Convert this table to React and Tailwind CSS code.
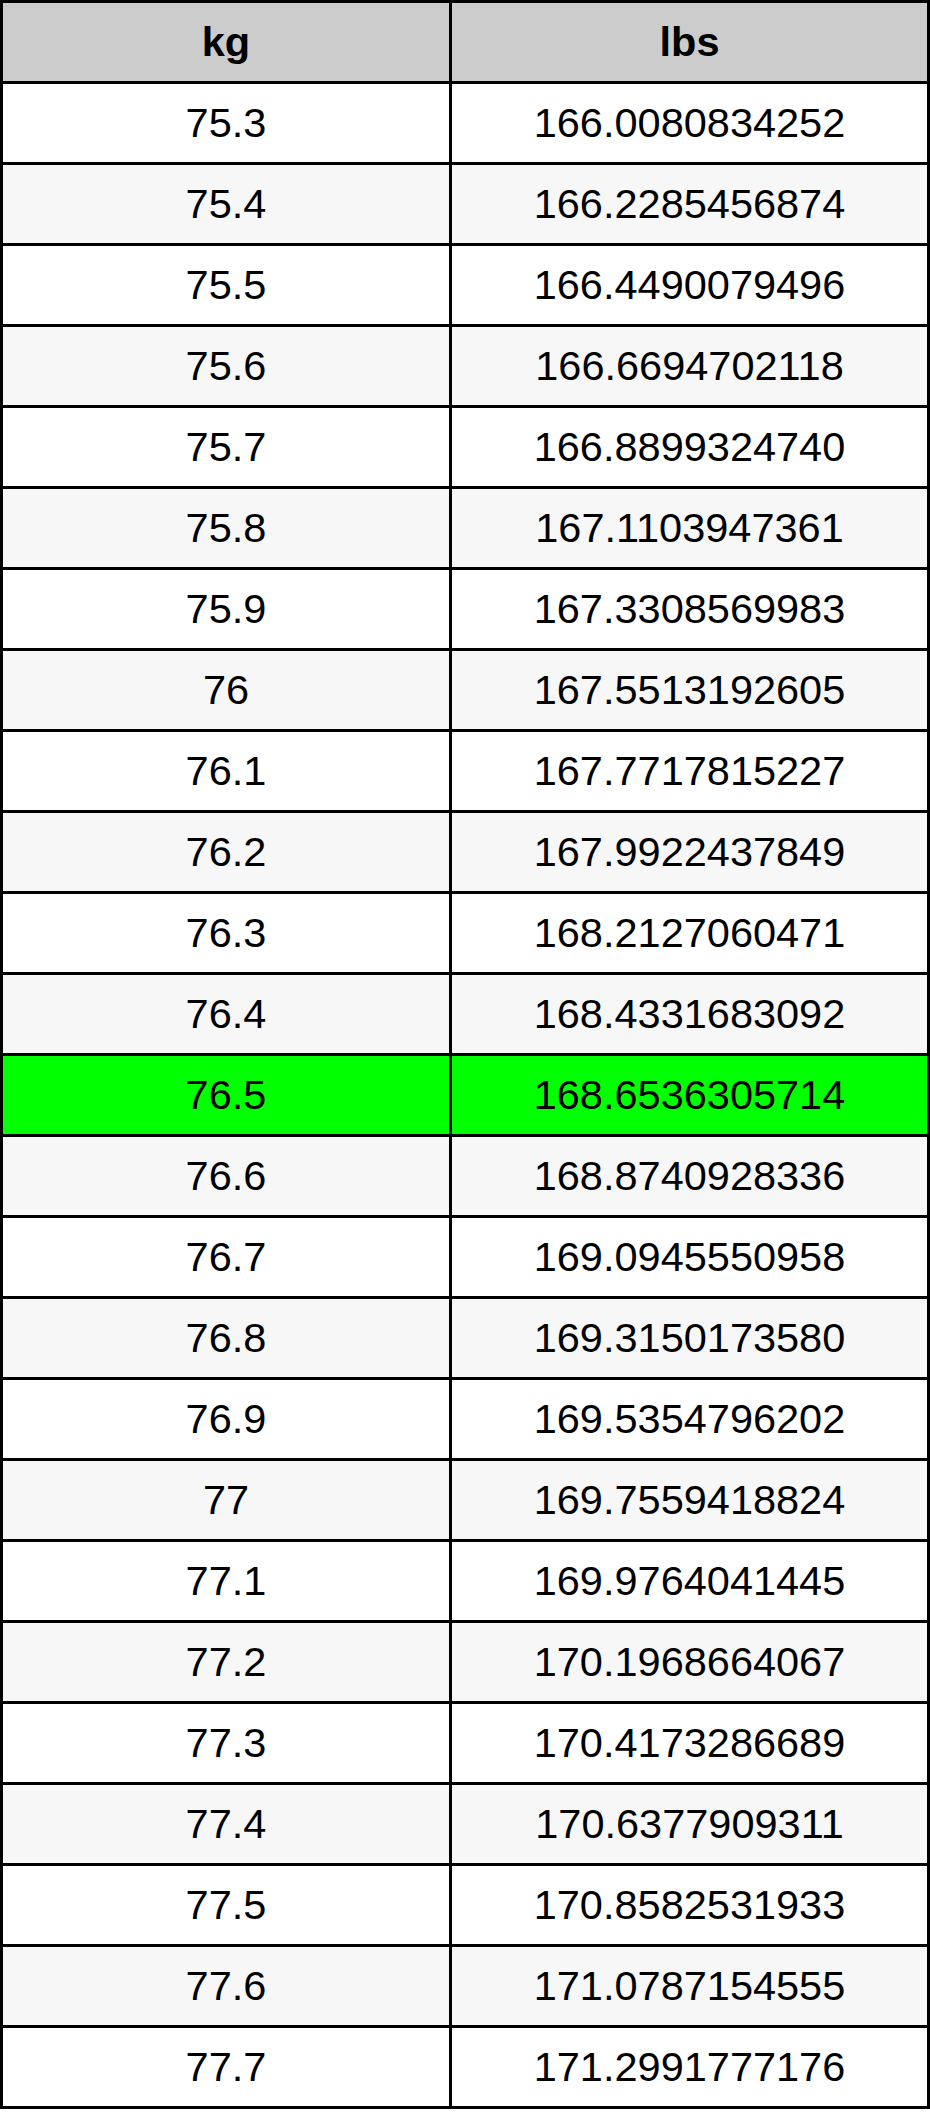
// kg → lbs conversion table, 75.3 to 77.7 kg, with the 76.5 row highlighted.
const ROWS = [
  ["75.3", "166.0080834252"],
  ["75.4", "166.2285456874"],
  ["75.5", "166.4490079496"],
  ["75.6", "166.6694702118"],
  ["75.7", "166.8899324740"],
  ["75.8", "167.1103947361"],
  ["75.9", "167.3308569983"],
  ["76", "167.5513192605"],
  ["76.1", "167.7717815227"],
  ["76.2", "167.9922437849"],
  ["76.3", "168.2127060471"],
  ["76.4", "168.4331683092"],
  ["76.5", "168.6536305714"],
  ["76.6", "168.8740928336"],
  ["76.7", "169.0945550958"],
  ["76.8", "169.3150173580"],
  ["76.9", "169.5354796202"],
  ["77", "169.7559418824"],
  ["77.1", "169.9764041445"],
  ["77.2", "170.1968664067"],
  ["77.3", "170.4173286689"],
  ["77.4", "170.6377909311"],
  ["77.5", "170.8582531933"],
  ["77.6", "171.0787154555"],
  ["77.7", "171.2991777176"],
];

const HIGHLIGHT = "76.5";

// rows after the first carry a 3px top rule, so they're 81px tall (border-box)
function Row({ kg, lbs, bg, bold, first }) {
  return (
    <div
      className={`grid grid-cols-[446px_1fr] ${bg} ${first ? "h-[78px]" : "h-[81px] border-t-[3px] border-black"} ${
        bold ? "font-bold" : ""
      }`}
    >
      <div className="flex items-center justify-center">{kg}</div>
      <div className="flex items-center justify-center border-l-[3px] border-black">{lbs}</div>
    </div>
  );
}

export default function App() {
  return (
    <div className="min-h-[2115px] bg-white">
      <div
        className="w-[930px] border-[3px] border-black text-[41.5px] text-black"
        style={{ fontFamily: '"Liberation Sans", Arial, sans-serif' }}
      >
        <Row kg="kg" lbs="lbs" bg="bg-[#cccccc]" bold first />
        {ROWS.map(([kg, lbs], i) => (
          <Row
            key={kg}
            kg={kg}
            lbs={lbs}
            bg={kg === HIGHLIGHT ? "bg-[#00ff00]" : i % 2 === 0 ? "bg-white" : "bg-[#f7f7f7]"}
          />
        ))}
      </div>
    </div>
  );
}
